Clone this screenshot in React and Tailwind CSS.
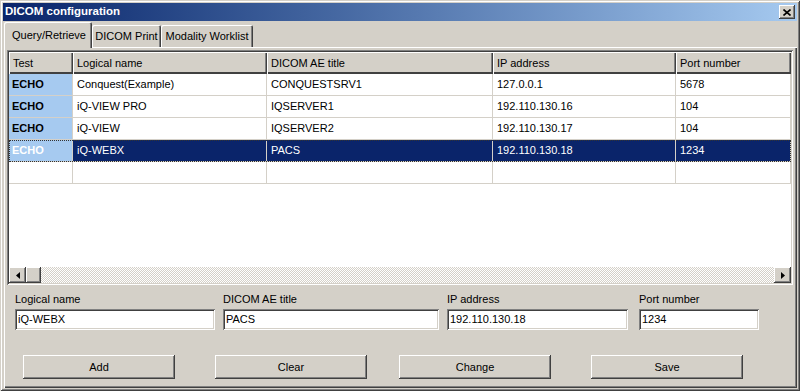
const COLS = [
  { label: 'Test', w: 'w-[64px]' },
  { label: 'Logical name', w: 'w-[194px]' },
  { label: 'DICOM AE title', w: 'w-[226px]' },
  { label: 'IP address', w: 'w-[183px]' },
  { label: 'Port number', w: 'w-[115px]' },
];

const ROWS = [
  ['Conquest(Example)', 'CONQUESTSRV1', '127.0.0.1', '5678'],
  ['iQ-VIEW PRO', 'IQSERVER1', '192.110.130.16', '104'],
  ['iQ-VIEW', 'IQSERVER2', '192.110.130.17', '104'],
  ['iQ-WEBX', 'PACS', '192.110.130.18', '1234'],
];

const FIELDS = [
  { label: 'Logical name', value: 'iQ-WEBX', w: 'w-[200px]' },
  { label: 'DICOM AE title', value: 'PACS', w: 'w-[216px]' },
  { label: 'IP address', value: '192.110.130.18', w: 'w-[181px]' },
  { label: 'Port number', value: '1234', w: 'w-[120px]' },
];

const RAISED =
  'shadow-[inset_-1px_-1px_#404040,inset_1px_1px_#fff,inset_-2px_-2px_#808080,inset_2px_2px_#d4d0c8]';
const SUNKEN =
  'shadow-[inset_1px_1px_#808080,inset_-1px_-1px_#fff,inset_2px_2px_#404040,inset_-2px_-2px_#d4d0c8]';

function ArrowButton({ dir }) {
  return (
    <div className={`w-[17px] h-[16px] bg-[#d4d0c8] flex items-center justify-center ${RAISED}`}>
      <svg width="4" height="7" viewBox="0 0 4 7">
        <polygon points={dir === 'left' ? '4,0 4,7 0,3.5' : '0,0 0,7 4,3.5'} fill="#000" />
      </svg>
    </div>
  );
}

function Tab({ label, active, w }) {
  if (active) {
    return (
      <div
        className={`${w} h-[26px] -mb-px relative z-10 bg-[#d4d0c8] flex items-center pl-[8px] rounded-t-[2px] shadow-[inset_1px_1px_#fff,inset_-1px_0_#404040,inset_-2px_0_#808080]`}
      >
        {label}
      </div>
    );
  }
  return (
    <div
      className={`${w} h-[22px] bg-[#d4d0c8] flex items-center justify-center rounded-t-[2px] shadow-[inset_1px_1px_#fff,inset_-1px_0_#404040,inset_-2px_0_#808080]`}
    >
      {label}
    </div>
  );
}

export default function App() {
  return (
    <div
      className={`w-[800px] h-[391px] bg-[#d4d0c8] p-[3px] flex flex-col text-[11px] text-black font-['Liberation_Sans',Arial,sans-serif] shadow-[inset_1px_1px_#d4d0c8,inset_-1px_-1px_#404040,inset_2px_2px_#fff,inset_-2px_-2px_#808080]`}
    >
      {/* title bar */}
      <div className="h-[18px] flex items-center justify-between pl-[2px] pr-[2px] bg-linear-to-r from-[#0a246a] to-[#a6caf0]">
        <span className="text-white font-bold text-[11.5px]">DICOM configuration</span>
        <div className={`w-[16px] h-[14px] bg-[#d4d0c8] flex items-center justify-center ${RAISED}`}>
          <svg width="8" height="7" viewBox="0 0 8 7">
            <path d="M0.5 0.5 L7.5 6.5 M7.5 0.5 L0.5 6.5" stroke="#000" strokeWidth="1.6" />
          </svg>
        </div>
      </div>

      {/* tabs */}
      <div className="h-[26px] flex items-end pl-[1px]">
        <Tab label="Query/Retrieve" active w="w-[88px]" />
        <Tab label="DICOM Print" w="w-[69px]" />
        <Tab label="Modality Worklist" w="w-[92px]" />
      </div>

      {/* tab page */}
      <div className="flex-1 ml-[1px] flex flex-col shadow-[inset_1px_1px_#fff,inset_-1px_-1px_#404040,inset_-2px_-2px_#808080]">
        {/* grid */}
        <div className={`ml-[3px] mt-[3px] w-[786px] h-[235px] p-[2px] flex flex-col bg-white ${SUNKEN}`}>
          <div className="h-[22px] flex bg-[#d4d0c8] shrink-0">
            {COLS.map(c => (
              <div
                key={c.label}
                className={`${c.w} h-full flex items-center pl-[4px] shadow-[inset_1px_1px_#fff,inset_-1px_-2px_#404040,inset_-2px_-2px_#808080]`}
              >
                {c.label}
              </div>
            ))}
          </div>
          <div className="flex-1 bg-white">
            {ROWS.map((r, i) => {
              const sel = i === 3;
              return (
                <div
                  key={r[0]}
                  className={`h-[22px] flex ${sel ? 'outline-1 outline-dotted outline-[#333] -outline-offset-1' : ''}`}
                >
                  <div
                    className={`w-[64px] h-full flex items-center pl-[3px] font-bold bg-[#a6caf0] border-r border-b border-[#d4d0c8] ${sel ? 'text-white' : 'text-black'}`}
                  >
                    ECHO
                  </div>
                  {r.map((v, j) => (
                    <div
                      key={j}
                      className={`${COLS[j + 1].w} h-full flex items-center pl-[4px] border-r border-b border-[#d4d0c8] ${sel ? 'bg-[#0a246a] text-white' : ''}`}
                    >
                      {v}
                    </div>
                  ))}
                </div>
              );
            })}
            <div className="h-[22px] flex">
              {COLS.map(c => (
                <div key={c.label} className={`${c.w} h-full border-r border-b border-[#d4d0c8]`} />
              ))}
            </div>
          </div>
          {/* horizontal scrollbar */}
          <div className="h-[16px] flex shrink-0">
            <ArrowButton dir="left" />
            <div className={`w-[15px] h-[16px] bg-[#d4d0c8] ${RAISED}`} />
            <div className="flex-1 bg-[repeating-conic-gradient(#d4d0c8_0_25%,#fff_0_50%)] bg-[length:2px_2px]" />
            <ArrowButton dir="right" />
          </div>
        </div>

        {/* edit fields */}
        <div className="flex pl-[11px] mt-[8px] gap-[8px]">
          {FIELDS.map((f, i) => (
            <div key={f.label} className={`flex flex-col ${i === 3 ? 'ml-[3px]' : ''}`}>
              <div className="h-[13px] leading-[13px]">{f.label}</div>
              <div className={`${f.w} h-[21px] mt-[3px] bg-white flex items-center pl-[3px] ${SUNKEN}`}>
                {f.value}
              </div>
            </div>
          ))}
        </div>

        {/* buttons */}
        <div className="flex pl-[19px] mt-[25px]">
          <button className={`w-[152px] h-[24px] bg-[#d4d0c8] ${RAISED}`}>Add</button>
          <button className={`w-[152px] h-[24px] ml-[40px] bg-[#d4d0c8] ${RAISED}`}>Clear</button>
          <button className={`w-[152px] h-[24px] ml-[32px] bg-[#d4d0c8] ${RAISED}`}>Change</button>
          <button className={`w-[152px] h-[24px] ml-[40px] bg-[#d4d0c8] ${RAISED}`}>Save</button>
        </div>
      </div>
    </div>
  );
}
